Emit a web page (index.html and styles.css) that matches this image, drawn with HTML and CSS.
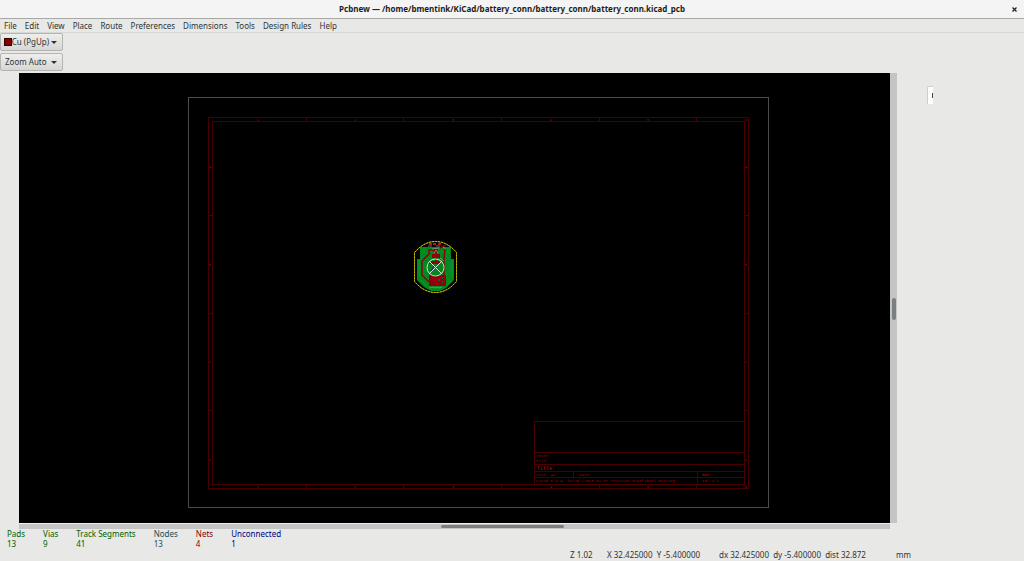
FILE: index.html
```
<!DOCTYPE html>
<html lang="en">
<head>
  <meta charset="UTF-8">
  <meta name="viewport" content="width=device-width, initial-scale=1.0">
  <title>Pcbnew</title>
  <link rel="stylesheet" href="styles.css">
</head>
<body>
  <header class="titlebar">
    <h1>Pcbnew — /home/bmentink/KiCad/battery_conn/battery_conn/battery_conn.kicad_pcb</h1>
    <button class="close" type="button" aria-label="Close">
      <svg width="5" height="5" viewBox="0 0 5 5"><path d="M.5.5l4 4M4.500.5l-4 4" stroke="#222" stroke-width="1.300"/></svg>
    </button>
  </header>

  <nav class="menubar">
    <a href="#">File</a>
    <a href="#">Edit</a>
    <a href="#">View</a>
    <a href="#">Place</a>
    <a href="#">Route</a>
    <a href="#">Preferences</a>
    <a href="#">Dimensions</a>
    <a href="#">Tools</a>
    <a href="#">Design Rules</a>
    <a href="#">Help</a>
  </nav>

  <div class="toolbar">
    <div class="combo combo-layer">
      <select aria-label="Layer"><option>.Cu (PgUp)</option></select>
      <span class="swatch"></span>
    </div>
    <div class="combo">
      <select aria-label="Zoom"><option>Zoom Auto</option></select>
    </div>
  </div>

  <main class="workspace">
    <svg class="board" viewBox="19 73 871 450" role="img" aria-label="Board">
      <!-- page edge -->
      <rect x="188.500" y="97.500" width="580" height="410" fill="none" stroke="#4c4c4c"/>

      <!-- drawing frame -->
      <g fill="none" stroke="#480000">
        <rect x="208.500" y="117.500" width="540" height="371"/>
        <rect x="212.500" y="121.500" width="532" height="363"/>
        <path d="M306.500 118v3M403.500 118v3M501.500 118v3M599.500 118v3M696.500 118v3"/>
        <path d="M306.500 485v3M403.500 485v3M501.500 485v3M599.500 485v3M696.500 485v3"/>
        <path d="M209 215.500h3M209 313.500h3M209 410.500h3M745 215.500h3M745 313.500h3M745 410.500h3"/>
        <path d="M534.500 484v-62.500h210M534 452.500h210M534 464.500h210M534 471.500h210M534 477.500h210M573.500 472v5M697.500 472v12"/>
      </g>
      <g class="frame-text frame-ref">
        <text x="258" y="121">1</text><text x="355" y="121">2</text><text x="453" y="121">3</text><text x="551" y="121">4</text><text x="648" y="121">5</text><text x="746" y="121">6</text>
        <text x="258" y="488">1</text><text x="355" y="488">2</text><text x="453" y="488">3</text><text x="551" y="488">4</text><text x="648" y="488">5</text><text x="746" y="488">6</text>
        <text x="210" y="168">A</text><text x="210" y="266">B</text><text x="210" y="363">C</text><text x="210" y="461">D</text>
        <text x="746" y="168">A</text><text x="746" y="266">B</text><text x="746" y="363">C</text><text x="746" y="461">D</text>
      </g>
      <g class="frame-text">
        <text x="536" y="457">Sheet:</text>
        <text x="536" y="462">File:</text>
        <text class="frame-title" x="537" y="470">Title:</text>
        <text x="536" y="476">Size: A4</text>
        <text x="579" y="476">Date:</text>
        <text class="frame-bold" x="702" y="476">Rev:</text>
        <text x="536" y="482">KiCad E.D.A.  kicad (2015-02-07 revision 52aef1b89)-missing</text>
        <text x="702" y="482">Id: 1/1</text>
      </g>

      <!-- board -->
      <path d="M417 259h3v-12h31v12h3v21l-8 8-6 3h-9l-7-4-7-7z" fill="#008a1c"/>
      <path d="M419 260v16M452 260v18M421 280l6 6M446 286l5-5M424 248v5M448 248v5" stroke="#0b9a2b" fill="none"/>
      <path d="M414.500 252.500c6-7 13-11 21-11s15 4 21 11v29c-6 7-13 11-21 11s-15-4-21-11z" fill="none" stroke="#6e6a00"/>
      <path d="M414.500 252.500c6-7 13-11 21-11s15 4 21 11v29c-6 7-13 11-21 11s-15-4-21-11z" fill="none" stroke="#c8bc00" stroke-dasharray="2 1"/>
      <circle cx="435.500" cy="265.500" r="15" fill="none" stroke="#187c70" stroke-width=".8" stroke-dasharray="7 3"/>
      <!-- tracks -->
      <g fill="none" stroke="#8d0010" stroke-width="1.500">
        <path d="M430 253l-8 8v14l7 7M445 249l-1 10v16M436 252v9"/>
        <path d="M433 250h-4v3M440 248l6-3"/>
      </g>
      <path d="M429 275h17v11h-17zM432 254h8v4h-8zM431 261h9v3h-9zM433 249h5v3h-5z" fill="#94000c"/>
      <path d="M438 279h2v2h-2zM442 277h1v2h-1zM442 281h1v2h-1z" fill="#006b2a"/>
      <path d="M429 243h3v2h-3zM433 243h3v2h-3zM438 243h3v2h-3z" fill="#b51822"/>
      <path d="M428 246h4M436 246h4M443 247l3 2M432 249l7-1M434 253l2-3 2 3M429 287l2 1 2-1 2 1 2-1 2 1 3-1M440 258l4 3" fill="none" stroke="#a39a94" stroke-width=".7"/>
      <path d="M428 263l5 1M431 271l3-5" stroke="#1c1c95" fill="none"/>
      <g fill="none" stroke="#d8ded8">
        <circle cx="435.500" cy="267.500" r="8.500"/>
        <path d="M429 261l13 13M442 261l-13 13"/>
      </g>
    </svg>
    <div class="scroll-y"><span class="thumb"></span></div>
    <div class="scroll-x"><span class="thumb"></span></div>
    <aside class="layers"><button class="tab" type="button" aria-label="Layers"></button></aside>
  </main>

  <footer class="status">
    <dl class="counts">
      <div class="green"><dt>Pads</dt><dd>13</dd></div>
      <div class="green"><dt>Vias</dt><dd>9</dd></div>
      <div class="green"><dt>Track Segments</dt><dd>41</dd></div>
      <div class="teal"><dt>Nodes</dt><dd>13</dd></div>
      <div class="red"><dt>Nets</dt><dd>4</dd></div>
      <div class="blue"><dt>Unconnected</dt><dd>1</dd></div>
    </dl>
    <div class="coords">
      <span class="zoom">Z 1.02</span>
      <span class="abs">X 32.425000&nbsp; Y -5.400000</span>
      <span class="rel">dx 32.425000&nbsp; dy -5.400000&nbsp; dist 32.872</span>
      <span class="unit">mm</span>
    </div>
  </footer>
</body>
</html>
```
FILE: styles.css
```
* { margin: 0; padding: 0; box-sizing: border-box; }
body { display: flex; flex-direction: column; height: 100vh; overflow: hidden; background: #e8e8e6; color: #2e3436; font: 8px/10px "Noto Sans", "Open Sans", sans-serif; }
button, select { font: inherit; color: inherit; border: none; background: none; }
a { color: inherit; text-decoration: none; }

/* title and menu */
.titlebar { display: grid; grid-template-columns: 20px 1fr 20px; align-items: center; height: 19px; background: #f4f4f4; border-bottom: 1px solid #a8a8a6; }
.titlebar h1 { grid-column: 2; font-size: 8px; font-weight: bold; text-align: center; color: #1c1c1c; }
.close { display: flex; justify-content: center; align-items: center; height: 16px; }
.menubar { display: flex; gap: 8px; align-items: center; height: 14px; padding: 0 4px; border-bottom: 1px solid #d8d8d6; }

/* drop-downs */
.toolbar { display: flex; flex-direction: column; align-items: flex-start; gap: 2px; height: 40px; }
.combo { position: relative; width: 63px; height: 18px; }
.combo select { display: block; width: 100%; height: 100%; padding: 0 8px 0 4px; appearance: none; border: 1px solid #b4b4b2; border-radius: 2px; background: linear-gradient(#eeeeec, #d6d6d4); }
.combo::after { content: ""; position: absolute; right: 6px; top: 8px; border: 3px solid transparent; border-top-color: #2e3436; border-bottom: 0; }
.combo-layer select { padding-left: 9px; }
.swatch { position: absolute; left: 4px; top: 5px; width: 8px; height: 8px; background: #840000; border: 1px solid #300; }

/* canvas */
.workspace { flex: 1; display: grid; grid-template: 1fr 6px / 1fr 7px 127px; min-height: 0; padding-left: 19px; }
.board { display: block; width: 100%; height: 100%; min-height: 0; background: #000; }
.frame-text { fill: #a40000; font: 4px "Liberation Mono", monospace; white-space: pre; }
.frame-ref { text-anchor: middle; }
.frame-bold { font-weight: bold; }
.frame-title { font-size: 5px; font-weight: bold; }
.scroll-y, .scroll-x { display: flex; justify-content: center; align-items: center; background: #c3c4c4; }
.scroll-x { grid-row: 2; grid-column: 1; padding-left: 95px; border-top: 1px solid #eeeeec; }
.scroll-y { padding-top: 22px; }
.thumb { background: #7b7f82; border-radius: 2px; }
.scroll-y .thumb { width: 4px; height: 22px; }
.scroll-x .thumb { width: 123px; height: 3px; }
.layers { grid-row: 1; grid-column: 3; padding: 13px 0 0 30px; }
.tab { display: flex; justify-content: flex-end; align-items: center; width: 6px; height: 18px; background: #fff; border-left: 1px solid #ccc; border-top: 1px solid #ccc; border-radius: 2px 0 0 0; }
.tab::after { content: ""; width: 1px; height: 5px; background: #34485c; }

/* status bar */
.status { height: 32px; }
.counts { display: flex; gap: 18px; height: 21px; padding-left: 7px; }
.green { color: #006000; }
.teal { color: #1c4c54; }
.red { color: #840000; }
.blue { color: #000084; }
.coords { display: grid; grid-template-columns: 37px 112px 177px 1fr; padding-left: 570px; white-space: nowrap; }
```
